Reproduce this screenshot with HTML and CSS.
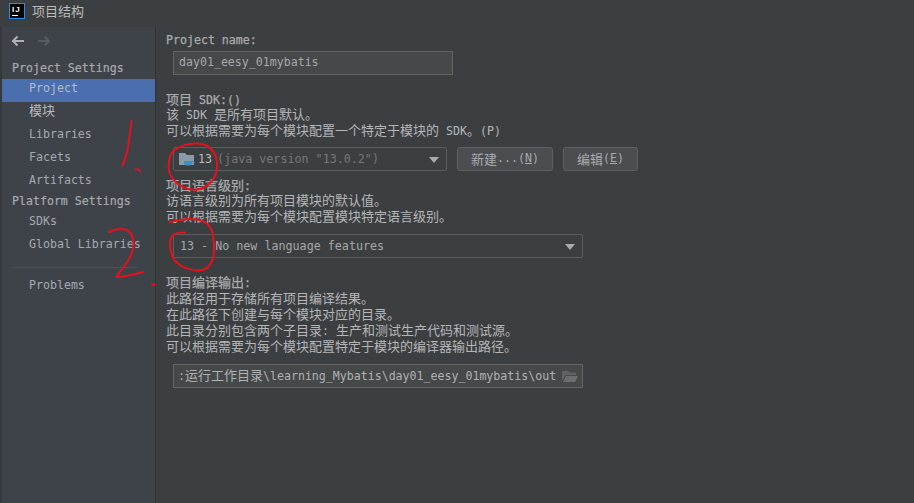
FILE: index.html
```html
<!DOCTYPE html>
<html lang="zh">
<head>
<meta charset="utf-8">
<title>项目结构</title>
<link rel="stylesheet" href="styles.css">
</head>
<body>
<div class="window">
  <header class="titlebar">
    <span class="logo"><span class="logo-text">IJ</span><span class="logo-bar"></span></span>
    <span class="title">项目结构</span>
  </header>
  <div class="main">
    <aside class="sidebar">
      <div class="nav-arrows">
        <svg class="arrow" width="16" height="14" viewBox="0 0 16 14"><path d="M14 7H3M7.500 2.500L3 7l4.500 4.500" fill="none" stroke="#afb1b3" stroke-width="2"/></svg>
        <svg class="arrow" width="16" height="14" viewBox="0 0 16 14"><path d="M2 7h11M8.500 2.500L13 7l-4.500 4.500" fill="none" stroke="#5a5d5f" stroke-width="2"/></svg>
      </div>
      <div class="group group-first">Project Settings</div>
      <div class="item selected">Project</div>
      <div class="item cjk">模块</div>
      <div class="item">Libraries</div>
      <div class="item">Facets</div>
      <div class="item item-last">Artifacts</div>
      <div class="group">Platform Settings</div>
      <div class="item">SDKs</div>
      <div class="item">Global Libraries</div>
      <div class="divider"></div>
      <div class="item">Problems</div>
    </aside>
    <section class="content">
      <div class="label first-label">Project name:</div>
      <div class="field name-field"><span class="mono">day01_eesy_01mybatis</span></div>

      <div class="label sdk-label">项目<span class="mono"> SDK:()</span></div>
      <div class="line">该<span class="mono"> SDK </span>是所有项目默认。</div>
      <div class="line">可以根据需要为每个模块配置一个特定于模块的<span class="mono"> SDK</span>。<span class="mono">(P)</span></div>

      <div class="sdk-row">
        <div class="field combo sdk-combo">
          <svg class="folder" width="16" height="14" viewBox="0 0 16 14">
            <path d="M0 1h6l2 2h7v10H0z" fill="#8a9aa8"/>
            <path d="M5 9h8v2c0 1.500-1 2.500-2.500 2.500h-3C6 13.500 5 12.500 5 11z" fill="#3592c4"/>
            <path d="M13 9.500h2v2h-2" fill="none" stroke="#3592c4"/>
          </svg>
          <span class="mono sdk-num">13</span>
          <span class="mono dim">(java version "13.0.2")</span>
          <span class="caret"></span>
        </div>
        <div class="btn new-btn">新建<span class="mono">...(<u>N</u>)</span></div>
        <div class="btn edit-btn">编辑<span class="mono">(<u>E</u>)</span></div>
      </div>

      <div class="label level-label">项目语言级别<span class="mono">:</span></div>
      <div class="line">访语言级别为所有项目模块的默认值。</div>
      <div class="line">可以根据需要为每个模块配置模块特定语言级别。</div>

      <div class="field combo wide level-combo">
        <span class="mono">13 - No new language features</span>
        <span class="caret"></span>
      </div>

      <div class="label out-label">项目编译输出<span class="mono">:</span></div>
      <div class="line">此路径用于存储所有项目编译结果。</div>
      <div class="line">在此路径下创建与每个模块对应的目录。</div>
      <div class="line">此目录分别包含两个子目录<span class="mono">: </span>生产和测试生产代码和测试源。</div>
      <div class="line">可以根据需要为每个模块配置特定于模块的编译器输出路径。</div>

      <div class="field wide path-field">
        <span class="path"><span class="mono">:</span>运行工作目录<span class="mono">\learning_Mybatis\day01_eesy_01mybatis\out</span></span>
        <svg class="open" width="16" height="14" viewBox="0 0 16 14">
          <path d="M0 2h6l1.500 1.500H14V6H3.500L0 12z" fill="#606365"/>
          <path d="M4 7h12l-3 6H1z" fill="#6c6f71"/>
        </svg>
      </div>
    </section>
  </div>
  <svg class="ink" width="914" height="503" viewBox="0 0 914 503">
    <g fill="none" stroke="#e8101a" stroke-width="2" stroke-linecap="round" stroke-linejoin="round">
      <path d="M131.500 121C130.500 130 129.500 138 128 147C127 154 124.500 160 122.500 165.500"/>
      <path d="M135.500 169.500C137 168.500 139 169.500 140 171.500"/>
      <path d="M109 232C114 229.500 120 228.500 125 229.500C131 231 134 238 133.500 246C132.500 255 128 262 123 268C120 272 117 275 116.500 277C125 277 135 274 143 272"/>
      <path d="M152 284.500H155"/>
      <path d="M173 151C180 146 190 143 198 143.500C207 144 213 149 216 157C218.500 166 216.500 175 212 181C206 188 197 191 188 189C178 186 171 179 169 171C168 164 169.500 156 173 151"/>
      <path d="M170 222C180 219.500 190 218.500 197 219.500C206 221 212 226 213 236C214.500 246 215 255 212 261C209 268 203 271 197 270.500C188 270 178 266 173 258C170 251 169.500 243 171 238C173 233 179 232 185 232.500"/>
    </g>
  </svg>
</div>
</body>
</html>
```
FILE: styles.css
```css
* { box-sizing: border-box; }
html, body { margin: 0; padding: 0; }
body { background: #3c3f41; }
.window {
  position: relative;
  width: 914px;
  height: 503px;
  overflow: hidden;
  background: #3c3f41;
  color: #bbbbbb;
  font-family: "Noto Sans CJK SC", "DejaVu Sans Mono", monospace;
  font-size: 13px;
}
.mono { font-family: "DejaVu Sans Mono", "Noto Sans CJK SC", monospace; font-size: 11.6px; white-space: pre; }
.titlebar {
  display: flex;
  align-items: center;
  height: 27px;
  padding: 0 0 5px 9px;
  background: #3c3f41;
}
.logo {
  position: relative;
  width: 16px;
  height: 16px;
  background: #000;
  border: 1px solid #1f8ff0;
  display: block;
}
.logo-text {
  position: absolute;
  left: 2px;
  top: 1px;
  font: bold 8px/9px "Liberation Sans", sans-serif;
  letter-spacing: 1px;
  color: #fff;
}
.logo-bar {
  position: absolute;
  left: 2px;
  top: 11px;
  width: 6px;
  height: 1px;
  background: #fff;
}
.title { margin-left: 7px; font-size: 13px; line-height: 16px; color: #bbbbbb; }
.main { display: flex; height: 476px; }
.sidebar {
  width: 156px;
  padding-left: 2px;
  background: linear-gradient(to right, #36393b 2px, #3e434a 2px);
  border-right: 1px solid #323232;
  font-family: "DejaVu Sans Mono", monospace;
  font-size: 11.6px;
}
.nav-arrows { display: flex; gap: 10px; height: 30px; padding: 7px 0 0 8px; }
.arrow { display: block; }
.group {
  height: 22px;
  line-height: 22px;
  padding-left: 10px;
  color: #a7a9ab;
  -webkit-text-stroke: 0.2px #a7a9ab;
}
.group-first { height: 22px; line-height: 23px; }
.item {
  height: 23px;
  line-height: 19px;
  padding-left: 27px;
  color: #a4aab0;
}
.item-last { height: 19px; }
.cjk { font-family: "Noto Sans CJK SC", sans-serif; font-size: 13px; line-height: 15px; color: #b8babc; }
.selected { background: #4b6eaf; color: #b5bcc6; width: 153px; }
.divider { height: 1px; margin: 9px 18px 8px 10px; background: #4d5055; }
.content { flex: 1; padding-left: 10px; }
.label { height: 16px; line-height: 16px; color: #a9abad; -webkit-text-stroke: 0.25px #a9abad; }
.line { height: 16px; line-height: 14px; color: #b4b6b8; }
.first-label { margin-top: 5px; font-family: "DejaVu Sans Mono", monospace; font-size: 11.6px; }
.field {
  display: flex;
  align-items: center;
  height: 24px;
  margin-left: 7px;
  padding-left: 5px;
  border: 1px solid #646464;
  background: #45494a;
  color: #a6a8aa;
}
.name-field { width: 280px; margin-top: 3px; padding-bottom: 2px; }
.sdk-label { margin-top: 16px; }
.sdk-row { display: flex; margin-top: 8px; }
.combo { position: relative; border-radius: 2px; border-color: #5a5d5f; background: #3c3f41; }
.combo .mono { font-size: 11.7px; }
.sdk-combo { width: 274px; padding-left: 5px; }
.level-combo { padding-left: 6px; }
.folder { margin-right: 3px; flex: none; }
.sdk-num { color: #bbbbbb; margin-right: 5px; }
.dim { color: #75787a; }
.caret {
  position: absolute;
  right: 7px;
  top: 9px;
  width: 0;
  height: 0;
  border-left: 5px solid transparent;
  border-right: 5px solid transparent;
  border-top: 6px solid #a9abad;
}
.btn {
  display: flex;
  align-items: center;
  justify-content: center;
  height: 24px;
  padding-bottom: 2px;
  border: 1px solid #5e6163;
  border-radius: 3px;
  background: #4a4e50;
  color: #a9abad;
}
.new-btn { width: 96px; margin-left: 10px; }
.edit-btn { width: 75px; margin-left: 10px; }
.level-label { margin-top: 6px; }
.wide { width: 410px; }
.level-combo { margin-top: 9px; }
.out-label { margin-top: 17px; line-height: 14px; }
.path-field { margin-top: 9px; padding-left: 4px; background: #45494a; justify-content: space-between; padding-right: 4px; }
.path { white-space: nowrap; overflow: hidden; color: #b0b2b4; margin-bottom: 3px; }
.open { flex: none; }
.ink { position: absolute; left: 0; top: 0; pointer-events: none; }
```
